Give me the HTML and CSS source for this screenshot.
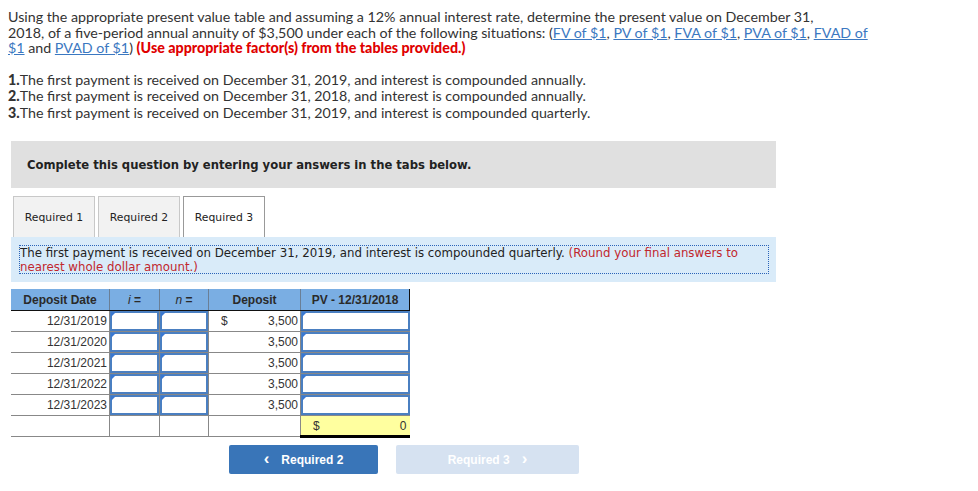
FILE: index.html
```html
<!DOCTYPE html>
<html>
<head>
<meta charset="utf-8">
<link rel="stylesheet" href="styles.css">
</head>
<body>
<div class="page">
  <p class="intro">Using the appropriate present value table and assuming a 12% annual interest rate, determine the present value on December 31,<br>2018, of a five-period annual annuity of $3,500 under each of the following situations: (<a href="#">FV of $1</a>, <a href="#">PV of $1</a>, <a href="#">FVA of $1</a>, <a href="#">PVA of $1</a>, <a href="#">FVAD of<br>$1</a> and <a href="#">PVAD of $1</a>) <span class="warn">(Use appropriate factor(s) from the tables provided.)</span></p>

  <ol class="items">
    <li><b>1.</b>The first payment is received on December 31, 2019, and interest is compounded annually.</li>
    <li><b>2.</b>The first payment is received on December 31, 2018, and interest is compounded annually.</li>
    <li><b>3.</b>The first payment is received on December 31, 2019, and interest is compounded quarterly.</li>
  </ol>

  <div class="banner">Complete this question by entering your answers in the tabs below.</div>

  <div class="tabs">
    <div class="tab">Required 1</div>
    <div class="tab">Required 2</div>
    <div class="tab active">Required 3</div>
  </div>

  <div class="instr">
    <div class="instr-inner">The first payment is received on December 31, 2019, and interest is compounded quarterly. <span class="red">(Round your final answers to<br>nearest whole dollar amount.)</span></div>
  </div>

  <table class="grid">
    <thead>
      <tr>
        <th class="c-date">Deposit Date</th>
        <th class="c-i"><i>i</i> =</th>
        <th class="c-n"><i>n</i> =</th>
        <th class="c-dep">Deposit</th>
        <th class="c-pv">PV - 12/31/2018</th>
      </tr>
    </thead>
    <tbody>
      <tr>
        <td class="date">12/31/2019</td>
        <td class="inp"><div class="box"></div></td>
        <td class="inp"><div class="box"></div></td>
        <td class="dep"><span class="cur">$</span><span>3,500</span></td>
        <td class="inp"><div class="box"></div></td>
      </tr>
      <tr>
        <td class="date">12/31/2020</td>
        <td class="inp"><div class="box"></div></td>
        <td class="inp"><div class="box"></div></td>
        <td class="dep"><span class="cur"></span><span>3,500</span></td>
        <td class="inp"><div class="box"></div></td>
      </tr>
      <tr>
        <td class="date">12/31/2021</td>
        <td class="inp"><div class="box"></div></td>
        <td class="inp"><div class="box"></div></td>
        <td class="dep"><span class="cur"></span><span>3,500</span></td>
        <td class="inp"><div class="box"></div></td>
      </tr>
      <tr>
        <td class="date">12/31/2022</td>
        <td class="inp"><div class="box"></div></td>
        <td class="inp"><div class="box"></div></td>
        <td class="dep"><span class="cur"></span><span>3,500</span></td>
        <td class="inp"><div class="box"></div></td>
      </tr>
      <tr>
        <td class="date">12/31/2023</td>
        <td class="inp"><div class="box"></div></td>
        <td class="inp"><div class="box"></div></td>
        <td class="dep"><span class="cur"></span><span>3,500</span></td>
        <td class="inp"><div class="box"></div></td>
      </tr>
      <tr class="total">
        <td></td>
        <td></td>
        <td></td>
        <td></td>
        <td class="sum"><span class="cur">$</span><span>0</span></td>
      </tr>
    </tbody>
  </table>

  <div class="nav">
    <button class="btn prev"><span class="chev">&#8249;</span>Required 2</button>
    <button class="btn next">Required 3<span class="chev">&#8250;</span></button>
  </div>
</div>
</body>
</html>
```

FILE: styles.css
```css
html, body {
  margin: 0;
  padding: 0;
  background: #fff;
}
.page {
  padding: 9px 0 0 8px;
  font-family: "Lato", "Open Sans", sans-serif;
  color: #333;
}
.intro {
  margin: 0;
  font-size: 14.25px;
  line-height: 15.5px;
  white-space: nowrap;
}
.intro a {
  color: #3b78c1;
  text-decoration: underline;
}
.warn {
  color: #e00000;
  font-weight: 900;
}
.items {
  list-style: none;
  margin: 16px 0 0 0;
  padding: 0;
  font-size: 14.25px;
  line-height: 16.5px;
}
.items b {
  font-weight: 900;
}
.banner {
  margin: 20px 0 0 3px;
  width: 749px;
  height: 47px;
  padding-left: 16px;
  background: #e0e0e0;
  display: flex;
  align-items: center;
  font-family: "DejaVu Sans", Verdana, sans-serif;
  font-weight: bold;
  font-size: 11.6px;
  color: #222;
}
.tabs {
  display: flex;
  gap: 3px;
  margin: 8px 0 0 5px;
  height: 41px;
}
.tab {
  width: 82px;
  height: 41px;
  box-sizing: border-box;
  border: 1px solid #c8c8c8;
  border-bottom: none;
  background: #f2f2f2;
  display: flex;
  align-items: center;
  justify-content: center;
  font-family: "DejaVu Sans", Verdana, sans-serif;
  font-size: 10.8px;
  color: #222;
}
.tab.active {
  width: 82px;
  background: #fff;
  border-color: #999;
}
.instr {
  margin-left: 3px;
  width: 765px;
  height: 45px;
  box-sizing: border-box;
  background: #d9ebf9;
  padding: 8px 7px 0 8px;
}
.instr-inner {
  border: 1px dotted #2a63b8;
  height: 29px;
  box-sizing: border-box;
  font-family: "DejaVu Sans", Verdana, sans-serif;
  font-size: 11.8px;
  line-height: 14px;
  color: #222;
  white-space: nowrap;
}
.red {
  color: #c1272d;
}
.grid {
  margin: 7px 0 0 3px;
  border-collapse: collapse;
  font-family: "Liberation Sans", Arial, sans-serif;
  font-size: 12px;
  color: #333;
}
.grid th {
  background: #7aaee3;
  height: 21px;
  padding: 0;
  font-weight: bold;
  color: #2a2a2a;
  border-left: 1px solid #6a7f96;
  border-bottom: 1px solid #111;
  text-align: center;
}
.grid th i {
  font-weight: normal;
}
.grid th.c-date { border-left: none; }
.grid th.c-pv { border-right: 1px solid #111; }
.c-date { width: 98px; }
.c-i { width: 49px; }
.c-n { width: 48px; }
.c-dep { width: 91px; }
.c-pv { width: 108px; }
.grid td {
  height: 21px;
  padding: 0;
  border-left: 1px solid #888;
  border-bottom: 1px solid #888;
  box-sizing: border-box;
}
.grid td:first-child {
  border-left: none;
}
.grid td.date {
  text-align: right;
  padding-right: 2px;
}
.grid td.inp {
  position: relative;
  padding: 0;
}
.box {
  height: 20px;
  border: 2px solid #4a7fc1;
  box-sizing: border-box;
  background: #fff;
}
.grid td.inp::before {
  content: "";
  position: absolute;
  left: 1px;
  top: 1px;
  border-top: 5px solid #3a78d0;
  border-right: 5px solid transparent;
}
.grid td.dep {
  padding: 0 2px 0 12px;
}
.grid td.dep, .grid td.sum {
  white-space: nowrap;
}
.dep, .sum {
  text-align: right;
}
.cur {
  float: left;
  color: #333;
}
.grid td.sum {
  background: #ffff9f;
  border-bottom: 3px solid #000;
  padding: 0 3px 0 12px;
}
.nav {
  display: flex;
  gap: 18px;
  margin: 7px 0 0 221px;
}
.btn {
  height: 29px;
  border: none;
  border-radius: 2px;
  font-family: "Liberation Sans", Arial, sans-serif;
  font-weight: bold;
  font-size: 12px;
  color: #fff;
  display: flex;
  align-items: center;
  justify-content: center;
  padding: 0;
}
.btn.prev {
  width: 149px;
  background: #3975b8;
}
.btn.next {
  width: 183px;
  background: #d6e2f1;
}
.chev {
  font-size: 17px;
  line-height: 1;
  margin: -2px 12px 0 0;
}
.btn.next .chev {
  margin: -2px 0 0 12px;
}
```
